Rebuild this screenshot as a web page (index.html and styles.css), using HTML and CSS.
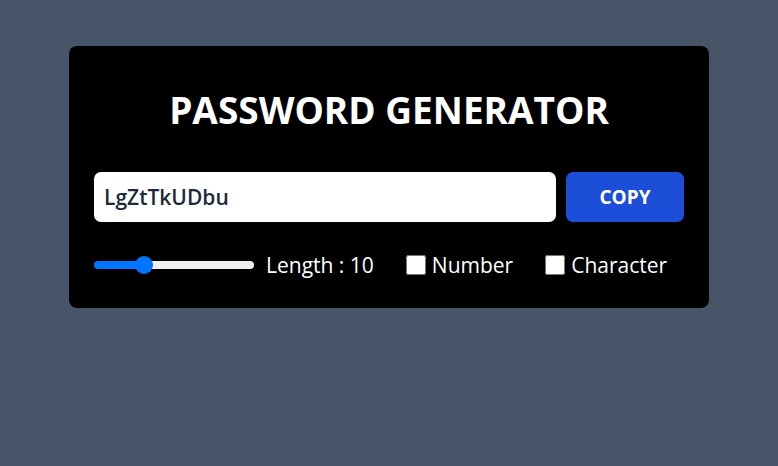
FILE: index.html
```html
<!DOCTYPE html>
<html lang="en">
<head>
<meta charset="utf-8">
<title>Password Generator</title>
<link rel="stylesheet" href="styles.css">
</head>
<body>
<div class="card">
  <h1 class="title">PASSWORD GENERATOR</h1>
  <div class="output-row">
    <input class="password" type="text" value="LgZtTkUDbu" readonly>
    <button class="copy">COPY</button>
  </div>
  <div class="options">
    <div class="opt">
      <input class="range" type="range" min="6" max="20" value="10" style="--fill: 28.6%">
      <label class="lbl len">Length : 10</label>
    </div>
    <div class="opt">
      <input class="check" type="checkbox" id="num">
      <label class="lbl" for="num">Number</label>
    </div>
    <div class="opt">
      <input class="check" type="checkbox" id="chr">
      <label class="lbl" for="chr">Character</label>
    </div>
  </div>
</div>
</body>
</html>
```
FILE: styles.css
```css
html, body {
  margin: 0;
  padding: 0;
}
body {
  background: #475569;
  font-family: "Open Sans", "Noto Sans", sans-serif;
  height: 466px;
}
.card {
  width: 640px;
  box-sizing: border-box;
  margin: 46px auto 0;
  background: #000;
  border-radius: 8px;
  padding: 43px 25px 32px;
}
.title {
  margin: 0;
  color: #fff;
  font-size: 37px;
  line-height: 42px;
  font-weight: 700;
  text-align: center;
}
.output-row {
  display: flex;
  gap: 10px;
  margin-top: 41px;
}
.password {
  flex: 1;
  height: 50px;
  box-sizing: border-box;
  border: none;
  border-radius: 7px;
  padding: 0 10px;
  font-family: inherit;
  font-size: 21px;
  font-weight: 600;
  color: #1e293b;
  background: #fff;
  outline: none;
}
.copy {
  width: 118px;
  height: 50px;
  border: none;
  border-radius: 7px;
  background: #1d4ed8;
  color: #fff;
  font-family: inherit;
  font-weight: 700;
  font-size: 19px;
}
.options {
  display: flex;
  align-items: center;
  gap: 32px;
  margin-top: 32px;
  height: 22px;
}
.opt {
  display: flex;
  align-items: center;
}
.range {
  -webkit-appearance: none;
  appearance: none;
  width: 160px;
  height: 8px;
  margin: 0 12px 0 0;
  border-radius: 4px;
  background: linear-gradient(to right, #0075ff 0, #0075ff var(--fill), #efefef var(--fill), #efefef 100%);
  outline: none;
}
.range::-webkit-slider-thumb {
  -webkit-appearance: none;
  appearance: none;
  width: 18px;
  height: 18px;
  border-radius: 50%;
  background: #0075ff;
  border: none;
}
.check {
  width: 20px;
  height: 20px;
  margin: 0 6px 0 0;
}
.lbl {
  color: #fff;
  font-size: 21px;
  line-height: 24px;
}
```
